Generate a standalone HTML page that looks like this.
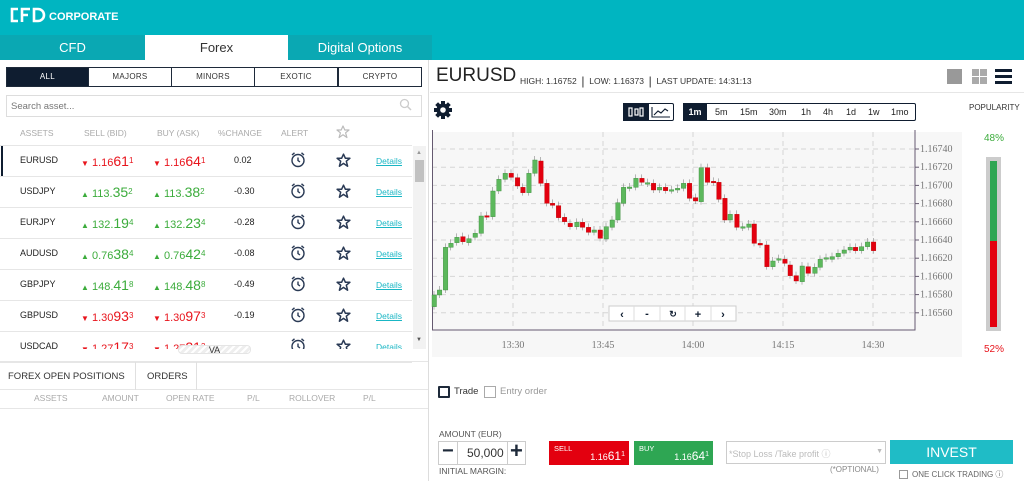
<!DOCTYPE html>
<html><head><meta charset="utf-8"><style>
*{box-sizing:border-box;margin:0;padding:0}
body{width:1024px;height:481px;overflow:hidden;background:#fff;font-family:"Liberation Sans",Arial,sans-serif;position:relative;color:#222}
.a{position:absolute}
.top{left:0;top:0;width:1024px;height:60px;background:#00b5c1}
.tab{top:35px;height:25px;font-size:13px;text-align:center;line-height:25px;color:#fff;background:#0aa8b3}
.fb{top:67px;height:20px;font-size:8px;text-align:center;line-height:18px;border:1px solid #1e2a3a;letter-spacing:.3px;color:#333}
.ch{top:128px;font-size:8.5px;color:#aaa}
.row{left:0;width:412px;height:31px;border-bottom:1px solid #e6e6e6;font-size:9px}
.row span{position:absolute;top:9px}
.red{color:#e8141c}.grn{color:#3cac3c}
.px{font-size:11px}.px b{font-weight:normal;font-size:14px}.px sup{font-size:8px;position:relative;top:-3px;vertical-align:baseline}
.det{color:#19b6c4;text-decoration:underline;font-size:8.5px}
.tf{top:103px;height:18px;font-size:9px;line-height:18px}
</style></head><body>
<div class="a top"></div>
<svg class="a" style="left:8px;top:5px" width="40" height="22"><g fill="none" stroke="#fff" stroke-width="2.6"><path d="M10 4H4V16H10"/><path d="M14 17V4H22M14 10H20"/><path d="M26 4H30A6 6 0 0 1 30 16H26Z"/></g></svg>
<div class="a" style="left:49px;top:11px;color:#fff;font-size:11px;font-weight:bold">CORPORATE</div>
<div class="a tab" style="left:0;width:145px">CFD</div>
<div class="a tab" style="left:145px;width:143px;background:#fff;color:#333">Forex</div>
<div class="a tab" style="left:288px;width:144px">Digital Options</div>
<div class="a" style="left:428px;top:60px;width:1px;height:421px;background:#ddd"></div>

<div class="a fb" style="left:6px;width:83px;background:#0f1d30;color:#fff">ALL</div>
<div class="a fb" style="left:88px;width:84px">MAJORS</div>
<div class="a fb" style="left:171px;width:84px">MINORS</div>
<div class="a fb" style="left:254px;width:84px">EXOTIC</div>
<div class="a fb" style="left:338px;width:84px">CRYPTO</div>
<div class="a" style="left:6px;top:95px;width:416px;height:22px;border:1px solid #ddd;font-size:9.5px;color:#777;padding:5px 4px">Search asset...</div>
<svg class="a" style="left:399px;top:98px" width="14" height="14"><circle cx="5.5" cy="5.5" r="4" fill="none" stroke="#ccc" stroke-width="1.3"/><line x1="8.5" y1="8.5" x2="12" y2="12" stroke="#ccc" stroke-width="1.5"/></svg>
<div class="a ch" style="left:20px">ASSETS</div><div class="a ch" style="left:84px">SELL (BID)</div><div class="a ch" style="left:157px">BUY (ASK)</div><div class="a ch" style="left:218px">%CHANGE</div><div class="a ch" style="left:281px">ALERT</div>
<svg class="a" style="left:336px;top:125px" width="14" height="14"><path d="M7 1L8.8 5H13L9.6 7.8L10.9 12.5L7 9.8L3.1 12.5L4.4 7.8L1 5H5.2Z" fill="none" stroke="#bbb" stroke-width="1.2" stroke-linejoin="round"/></svg>
<div class="a" style="left:0;top:145px;width:412px;height:1px;background:#e6e6e6"></div>
<div class="a" style="left:1px;top:146px;width:2px;height:30px;background:#0f1d30"></div>

<div id="rows"></div>
<div class="a" style="left:413px;top:146px;width:13px;height:203px;background:#f2f2f2"></div>
<div class="a" style="left:415px;top:160px;width:9px;height:22px;background:#c1c1c1"></div>
<div class="a" style="left:416px;top:150px;font-size:6px;color:#999">▲</div>
<div class="a" style="left:416px;top:337px;font-size:6px;color:#555">▼</div>
<div class="a" style="left:0;top:349px;width:428px;height:13px;background:#fff;border-bottom:1px solid #e6e6e6"></div>
<div class="a" style="left:178px;top:345px;width:73px;height:9px;border-radius:4px;background:repeating-linear-gradient(135deg,#eee 0 3px,#fff 3px 5px);border:1px solid #e5e5e5;font-size:9px;text-align:center;line-height:8px;color:#333">VA</div>
<div class="a" style="left:0;top:362px;width:428px;height:28px;border-bottom:1px solid #e6e6e6"></div>
<div class="a" style="left:8px;top:371px;font-size:9.5px;color:#333">FOREX OPEN POSITIONS</div>
<div class="a" style="left:135px;top:362px;width:1px;height:28px;background:#e0e0e0"></div>
<div class="a" style="left:147px;top:371px;font-size:9.5px;color:#333">ORDERS</div>
<div class="a" style="left:196px;top:362px;width:1px;height:28px;background:#e0e0e0"></div>
<div class="a" style="left:0;top:390px;width:428px;height:19px;border-bottom:1px solid #e6e6e6;font-size:8.5px;color:#aaa">
<span class="a" style="left:34px;top:3px">ASSETS</span><span class="a" style="left:102px;top:3px">AMOUNT</span><span class="a" style="left:166px;top:3px">OPEN RATE</span><span class="a" style="left:247px;top:3px">P/L</span><span class="a" style="left:289px;top:3px">ROLLOVER</span><span class="a" style="left:363px;top:3px">P/L</span></div>

<!-- right -->
<div class="a" style="left:436px;top:65px;font-size:19px;color:#222">EURUSD</div>
<div class="a" style="left:520px;top:73px;font-size:8.5px;color:#333">HIGH: 1.16752 &nbsp;<span style="font-size:12px;position:relative;top:1px">|</span>&nbsp; LOW: 1.16373 &nbsp;<span style="font-size:12px;position:relative;top:1px">|</span>&nbsp; LAST UPDATE: 14:31:13</div>
<div class="a" style="left:947px;top:69px;width:15px;height:15px;background:#999"></div>
<div class="a" style="left:972px;top:69px;width:7px;height:7px;background:#aaa"></div><div class="a" style="left:980px;top:69px;width:7px;height:7px;background:#aaa"></div><div class="a" style="left:972px;top:77px;width:7px;height:7px;background:#aaa"></div><div class="a" style="left:980px;top:77px;width:7px;height:7px;background:#aaa"></div>
<div class="a" style="left:995px;top:69px;width:17px;height:3px;background:#0f1d30;box-shadow:0 6px 0 #0f1d30,0 12px 0 #0f1d30"></div>
<div class="a" style="left:430px;top:92px;width:594px;height:1px;background:#e6e6e6"></div>
<svg class="a" style="left:434px;top:101px" width="18" height="18"><g fill="#0f1d30"><circle cx="9" cy="9" r="6.5"/><g id="tt"><rect x="7" y="0" width="4" height="18"/><rect x="0" y="7" width="18" height="4"/></g><use href="#tt" transform="rotate(45 9 9)"/></g><circle cx="9" cy="9" r="2.8" fill="#fff"/></svg>
<div class="a" style="left:623px;top:103px;width:51px;height:18px;border:1px solid #0f1d30;border-radius:2px"></div>
<div class="a" style="left:623px;top:103px;width:26px;height:18px;background:#0f1d30"></div>
<svg class="a" style="left:627px;top:106px" width="18" height="12"><g fill="none" stroke="#fff" stroke-width="1.2"><rect x="2" y="2" width="3" height="8"/><rect x="8" y="3" width="3" height="6"/><rect x="13" y="2" width="3" height="8"/></g></svg>
<svg class="a" style="left:651px;top:106px" width="20" height="12"><path d="M1 1V11H19M3 9L7 5L10 7L14 3L17 5" fill="none" stroke="#0f1d30" stroke-width="1.1"/></svg>
<div class="a" style="left:683px;top:103px;width:233px;height:18px;border:1px solid #0f1d30;border-radius:2px"></div>
<div class="a tf" style="left:683px;width:24px;background:#0f1d30;color:#fff;text-align:center;font-weight:bold">1m</div>
<div class="a tf" style="left:715px">5m</div><div class="a tf" style="left:740px">15m</div><div class="a tf" style="left:769px">30m</div><div class="a tf" style="left:801px">1h</div><div class="a tf" style="left:823px">4h</div><div class="a tf" style="left:846px">1d</div><div class="a tf" style="left:868px">1w</div><div class="a tf" style="left:891px">1mo</div>
<div class="a" style="left:969px;top:103px;font-size:8px;color:#333">POPULARITY</div>
<div class="a" style="left:984px;top:133px;font-size:10px;color:#3cac3c">48%</div>
<div class="a" style="left:986px;top:157px;width:15px;height:174px;background:#ccc"></div>
<div class="a" style="left:990px;top:161px;width:7px;height:80px;background:#2ea653"></div>
<div class="a" style="left:990px;top:241px;width:7px;height:86px;background:#e3000f"></div>
<div class="a" style="left:984px;top:344px;font-size:10px;color:#e8141c">52%</div>

<svg class="a" style="left:430px;top:130px" width="550" height="230" font-family="Liberation Serif,serif">
<rect x="2" y="2" width="530" height="225" fill="#f7f7f7"/>
<g id="grid" stroke="#d6d6d6" stroke-dasharray="5,4"></g>
<path d="M2.5 0V200H485V0" fill="none" stroke="#655a70" stroke-width="1"/>
<g id="cd"></g>
<g font-size="10" fill="#777" text-anchor="middle"><text x="83" y="218">13:30</text><text x="173" y="218">13:45</text><text x="263" y="218">14:00</text><text x="353" y="218">14:15</text><text x="443" y="218">14:30</text></g>
<g font-size="10" fill="#777" id="yl"></g>
<g transform="translate(179,176)"><rect width="127" height="15" fill="#fff" stroke="#ccc"/><g stroke="#ddd"><line x1="25" y1="0" x2="25" y2="15"/><line x1="51" y1="0" x2="51" y2="15"/><line x1="76" y1="0" x2="76" y2="15"/><line x1="102" y1="0" x2="102" y2="15"/></g>
<g fill="#0f1d30" font-size="11" font-family="Liberation Sans" font-weight="bold" text-anchor="middle"><text x="13" y="12">‹</text><text x="38" y="11">-</text><text x="89" y="12">+</text><text x="114" y="12">›</text><text x="64" y="11" font-size="9">↻</text></g></g>
</svg>

<div class="a" style="left:438px;top:386px;width:12px;height:12px;border:2px solid #1e2a3a;border-radius:1px"></div>
<div class="a" style="left:454px;top:386px;font-size:9.5px;color:#333">Trade</div>
<div class="a" style="left:484px;top:386px;width:12px;height:12px;border:1px solid #aaa"></div>
<div class="a" style="left:500px;top:386px;font-size:9.5px;color:#999">Entry order</div>
<div class="a" style="left:439px;top:429px;font-size:8.5px;color:#555">AMOUNT (EUR)</div>
<div class="a" style="left:438px;top:441px;width:88px;height:24px;border:1px solid #ccc"></div>
<div class="a" style="left:457px;top:441px;width:1px;height:24px;background:#ccc"></div><div class="a" style="left:507px;top:441px;width:1px;height:24px;background:#ccc"></div>
<div class="a" style="left:442px;top:440px;font-size:20px;color:#1e2a3a;font-weight:bold">−</div>
<div class="a" style="left:510px;top:438px;font-size:22px;color:#1e2a3a;font-weight:bold">+</div>
<div class="a" style="left:467px;top:446px;font-size:12px;color:#333">50,000</div>
<div class="a" style="left:439px;top:466px;font-size:8.5px;color:#555">INITIAL MARGIN:</div>
<div class="a" style="left:549px;top:441px;width:80px;height:24px;background:#e3000f;color:#fff"><span class="a" style="left:5px;top:3px;font-size:7.5px">SELL</span><span class="a" style="right:4px;top:8px;font-size:9px">1.16<b style="font-size:12px;font-weight:normal">61</b><sup style="font-size:7px">1</sup></span></div>
<div class="a" style="left:634px;top:441px;width:79px;height:24px;background:#2ea653;color:#fff"><span class="a" style="left:5px;top:3px;font-size:7.5px">BUY</span><span class="a" style="right:4px;top:8px;font-size:9px">1.16<b style="font-size:12px;font-weight:normal">64</b><sup style="font-size:7px">1</sup></span></div>
<div class="a" style="left:726px;top:441px;width:160px;height:23px;border:1px solid #ccc;font-size:9px;color:#bbb;padding:5px 2px">*Stop Loss /Take profit ⓘ<span style="float:right;font-size:7px;padding-top:1px">▼</span></div>
<div class="a" style="left:830px;top:465px;font-size:8px;color:#888">(*OPTIONAL)</div>
<div class="a" style="left:890px;top:440px;width:123px;height:24px;background:#1fbcc6;color:#fff;font-size:14px;text-align:center;line-height:24px">INVEST</div>
<div class="a" style="left:899px;top:470px;width:9px;height:9px;border:1px solid #999"></div>
<div class="a" style="left:912px;top:469px;font-size:8px;color:#666">ONE CLICK TRADING ⓘ</div>

<script>
var rows=[["EURUSD","red","1.16","61","1","1.16","64","1","0.02"],["USDJPY","grn","113.","35","2","113.","38","2","-0.30"],["EURJPY","grn","132.","19","4","132.","23","4","-0.28"],["AUDUSD","grn","0.76","38","4","0.76","42","4","-0.08"],["GBPJPY","grn","148.","41","8","148.","48","8","-0.49"],["GBPUSD","red","1.30","93","3","1.30","97","3","-0.19"],["USDCAD","red","1.27","17","3","1.27","21","3",""]];
var star='<svg width="15" height="15"><path d="M7.5 1.2L9.4 5.3H13.9L10.3 8.2L11.6 13.2L7.5 10.4L3.4 13.2L4.7 8.2L1.1 5.3H5.6Z" fill="none" stroke="#2a3a55" stroke-width="1.5" stroke-linejoin="round"/></svg>';
var h="";rows.forEach(function(r,i){var t=146+i*31,ar=r[1]=="red"?"▼":"▲";
h+='<div class="a row" style="top:'+t+'px"><span style="left:20px">'+r[0]+'</span><span class="px '+r[1]+'" style="left:81px;top:7px"><small style="font-size:8px">'+ar+'</small> '+r[2]+'<b>'+r[3]+'</b><sup>'+r[4]+'</sup></span><span class="px '+r[1]+'" style="left:153px;top:7px"><small style="font-size:8px">'+ar+'</small> '+r[5]+'<b>'+r[6]+'</b><sup>'+r[7]+'</sup></span><span style="left:234px">'+r[8]+'</span><span style="left:290px;top:5px"><svg width="16" height="17"><circle cx="8" cy="9.5" r="6" fill="none" stroke="#2a3a55" stroke-width="1.4"/><path d="M8 6.5V9.5L10 11M2 4L4.5 1.8M14 4L11.5 1.8" stroke="#2a3a55" stroke-width="1.4" fill="none"/></svg></span><span style="left:336px;top:7px">'+star+'</span><span class="det" style="left:376px;top:10px">Details</span></div>'});
document.getElementById("rows").innerHTML=h;
var g=document.getElementById("grid"),s="";
for(var i=0;i<10;i++){var y=19+i*18.2;s+='<line x1="2" y1="'+y+'" x2="485" y2="'+y+'"/>';}
[83,173,263,353,443].forEach(function(x){s+='<line x1="'+x+'" y1="2" x2="'+x+'" y2="200"/>'});
g.innerHTML=s;
var yl="";for(i=0;i<10;i++){var p=(1.16740-i*0.0002).toFixed(5);yl+='<text x="490" y="'+(22+i*18.2)+'">'+p+'</text><line x1="485" y1="'+(19+i*18.2)+'" x2="489" y2="'+(19+i*18.2)+'" stroke="#655a70"/>'}
document.getElementById("yl").innerHTML=yl;
var A=[[12,495,530,"g"],[28,480,495,"g"],[46,352,480,"g"],[62,340,352,"g"],[80,322,338,"g"],[98,320,335,"r"],[116,326,338,"g"],[135,310,322,"g"],[153,258,310,"g"],[170,257,261,"r"],[188,183,260,"g"],[206,148,183,"g"],[225,130,148,"g"],[243,130,142,"r"],[262,143,168,"r"],[278,172,188,"r"],[296,130,188,"g"],[314,90,130,"g"],[332,93,160,"r"],[350,160,220,"r"],[367,220,226,"r"],[385,227,263,"r"],[403,262,275,"r"],[420,280,290,"r"],[440,277,290,"g"],[457,277,292,"r"],[475,292,307,"r"],[492,300,307,"g"],[510,300,325,"r"],[528,290,327,"g"],[546,270,292,"g"],[563,218,270,"g"],[580,172,220,"g"],[598,171,175,"g"],[617,145,172,"g"],[635,145,157,"r"],[652,158,162,"g"],[670,160,180,"r"],[688,172,180,"g"],[706,172,182,"r"],[724,179,182,"g"],[742,175,180,"g"],[760,160,175,"g"],[778,160,205,"r"],[796,203,213,"r"],[813,113,215,"g"],[832,113,157,"r"],[850,154,158,"r"],[866,157,208,"r"],[884,205,270,"r"]];
var B=[[30,253,270,"g"],[50,253,292,"r"],[68,290,294,"g"],[86,282,292,"g"],[102,282,340,"r"],[120,340,345,"r"],[140,345,410,"r"],[158,393,410,"g"],[176,386,390,"g"],[194,388,400,"r"],[210,405,437,"r"],[228,437,453,"r"],[246,408,455,"g"],[264,410,430,"r"],[284,412,430,"g"],[300,388,412,"g"],[318,383,387,"g"],[336,380,388,"g"],[354,370,380,"g"],[372,360,370,"g"],[390,352,360,"g"],[406,352,362,"r"],[424,350,362,"g"],[442,336,350,"g"],[460,336,362,"r"]];
var c="";function add(x,t,b,k){var col=k=="g"?"#5cb85c":"#e3000f",st=k=="g"?"#3a8a3a":"#b00";c+='<line x1="'+(x+2)+'" y1="'+(t-4)+'" x2="'+(x+2)+'" y2="'+(b+3)+'" stroke="#888" stroke-width="0.6"/><rect x="'+x+'" y="'+t+'" width="4.5" height="'+Math.max(b-t,1.5)+'" fill="'+col+'" stroke="'+st+'" stroke-width="0.4"/>';}
A.forEach(function(d){add(d[0]/3-2,d[1]/3,d[2]/3,d[3])});
B.forEach(function(d){add(290+d[0]/3-2,d[1]/3,d[2]/3,d[3])});
document.getElementById("cd").innerHTML=c;
</script>
</body></html>
